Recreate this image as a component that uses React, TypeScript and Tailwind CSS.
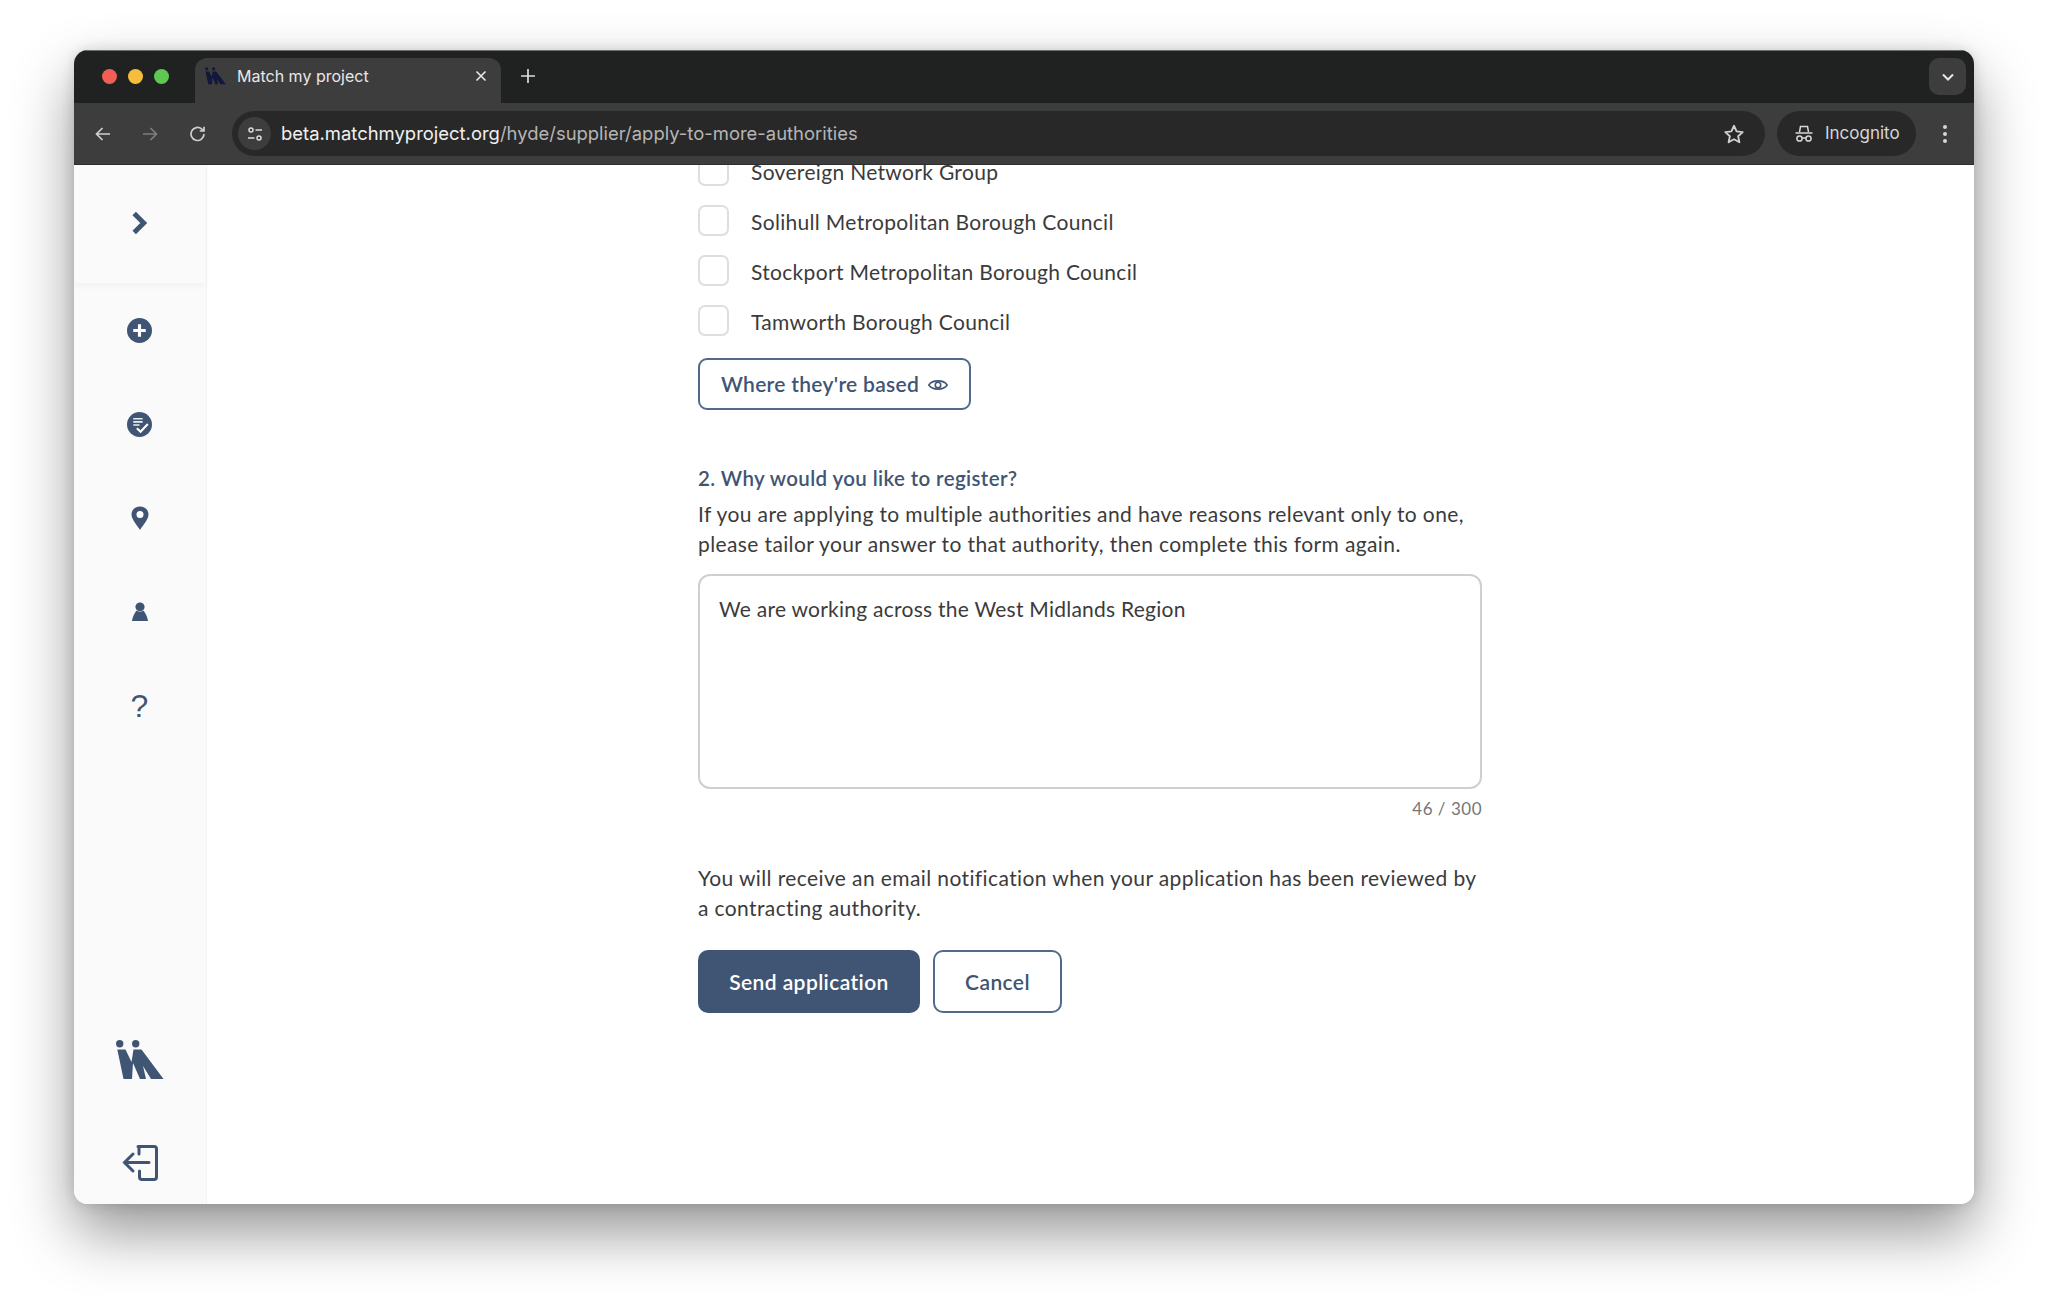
import React from "react";

const NAVY = "#405574";

function Logo({ className, fill }: { className: string; fill: string }) {
  return (
    <svg viewBox="11 11 48 40" className={className} fill={fill}>
      <circle cx="14.7" cy="14.7" r="3.7" />
      <circle cx="30.7" cy="14.7" r="3.7" />
      <path d="M12.3 20.5 L20.5 20.5 L26.5 33 L28.5 20.5 L36.5 20.5 L58.5 50 L46 50 L38 37 L41 50 L35 50 L28 34 L27 50 L18.5 50 Z" />
    </svg>
  );
}

function Row({ label }: { label: string }) {
  return (
    <div className="flex items-center h-[31px] mb-[19px]">
      <span className="w-[31px] h-[31px] rounded-[7px] border-2 border-[#dedede] bg-white shrink-0" />
      <span className="ml-[22px] pt-[2px] text-[21px] tracking-[0.32px] text-[#3b3b3b]">{label}</span>
    </div>
  );
}

function NavItem({ children }: { children: React.ReactNode }) {
  return <div className="h-[94px] flex items-center justify-center">{children}</div>;
}

export default function App() {
  return (
    <div
      className="w-[2048px] h-[1302px] bg-white overflow-hidden pt-[50px] pl-[74px]"
      style={{ fontFamily: "Lato, 'Liberation Sans', sans-serif" }}
    >
      <div className="w-[1900px] h-[1154px] rounded-[14px] overflow-hidden flex flex-col shadow-[0_28px_60px_rgba(0,0,0,0.42),0_0_14px_rgba(0,0,0,0.14)]">
        {/* tab strip */}
        <div className="h-[53px] bg-[#202221] flex items-end relative shrink-0 border-t border-[#6f6f6f]" style={{ fontFamily: "Inter, sans-serif" }}>
          <div className="flex items-center gap-[11px] pl-[28px] w-[121px] h-[52px] shrink-0 pb-[2px]">
            <span className="w-[15px] h-[15px] rounded-full bg-[#ef5f56] shrink-0" />
            <span className="w-[15px] h-[15px] rounded-full bg-[#f6bd3d] shrink-0" />
            <span className="w-[15px] h-[15px] rounded-full bg-[#5fc853] shrink-0" />
          </div>
          <div className="w-[306px] h-[45px] bg-[#3d3d3d] rounded-t-[12px] flex items-center pl-[10px] pr-[14px] shrink-0 pb-[9px]">
            <Logo className="w-[21px] h-[18px]" fill="#12173d" />
            <span className="ml-[11px] text-[16px] text-[#e8e8e8]">Match my project</span>
            <svg viewBox="0 0 12 12" className="w-[12px] h-[12px] ml-auto" stroke="#e8e8e8" strokeWidth="1.6" fill="none">
              <path d="M1.5 1.5 L10.5 10.5 M10.5 1.5 L1.5 10.5" />
            </svg>
          </div>
          <div className="h-[45px] pb-[9px] flex items-center ml-[19px]">
            <svg viewBox="0 0 16 16" className="w-[16px] h-[16px]" stroke="#dcdcdc" strokeWidth="1.7" fill="none">
              <path d="M8 1 V15 M1 8 H15" />
            </svg>
          </div>
          <div className="absolute right-[8px] top-[7px] w-[37px] h-[37px] bg-[#3d3d3d] rounded-[10px] flex items-center justify-center">
            <svg viewBox="0 0 14 14" className="w-[14px] h-[14px]" stroke="#e8e8e8" strokeWidth="2" fill="none">
              <path d="M2 4.5 L7 9.5 L12 4.5" />
            </svg>
          </div>
        </div>

        {/* toolbar */}
        <div className="h-[62px] bg-[#3d3d3d] flex items-center shrink-0 border-b border-[#2e2e2e]" style={{ fontFamily: "Inter, sans-serif" }}>
          <div className="w-[158px] flex items-center shrink-0">
            <svg viewBox="0 0 20 20" className="w-[20px] h-[20px] ml-[19px]" stroke="#cfcfcf" strokeWidth="1.7" fill="none">
              <path d="M17 10 H3.5 M9.5 4 L3.5 10 L9.5 16" />
            </svg>
            <svg viewBox="0 0 20 20" className="w-[20px] h-[20px] ml-[27px]" stroke="#7e7e7e" strokeWidth="1.7" fill="none">
              <path d="M3 10 H16.5 M10.5 4 L16.5 10 L10.5 16" />
            </svg>
            <svg viewBox="0 0 20 20" className="w-[20px] h-[20px] ml-[28px]" stroke="#cfcfcf" strokeWidth="1.7" fill="none">
              <path d="M16 10 A6.5 6.5 0 1 1 13.8 5.1 L16 7 M16 2.8 V7 H11.8" />
            </svg>
          </div>
          <div className="w-[1533px] h-[45px] rounded-full bg-[#282828] flex items-center shrink-0 pl-[6px] pr-[20px]">
            <span className="w-[33px] h-[33px] rounded-full bg-[#3d3d3d] flex items-center justify-center shrink-0">
              <svg viewBox="0 0 18 18" className="w-[18px] h-[18px]" stroke="#dcdcdc" strokeWidth="1.5" fill="none">
                <circle cx="5" cy="5" r="2" />
                <path d="M9.5 5 H16 M2 13 H8.5" />
                <circle cx="13" cy="13" r="2" />
              </svg>
            </span>
            <span className="ml-[10px] text-[18.45px] text-[#b5b5b5]">
              <span className="text-[#f0f0f0]">beta.matchmyproject.org</span>/hyde/supplier/apply-to-more-authorities
            </span>
            <svg viewBox="0 0 24 24" className="w-[22px] h-[22px] ml-auto" stroke="#d0d0d0" strokeWidth="2" fill="none">
              <path d="M12 3 L14.8 9.1 L21.5 9.9 L16.5 14.4 L17.9 21 L12 17.7 L6.1 21 L7.5 14.4 L2.5 9.9 L9.2 9.1 Z" strokeLinejoin="round" />
            </svg>
          </div>
          <div className="ml-[12px] w-[139px] h-[45px] rounded-full bg-[#282828] flex items-center pl-[17px] shrink-0">
            <svg viewBox="0 0 20 20" className="w-[20px] h-[20px]" stroke="#d6d6d6" strokeWidth="1.5" fill="none">
              <path d="M5.5 8 L6.5 2.5 H13.5 L14.5 8 M1.5 9 H18.5" />
              <circle cx="5.5" cy="14.5" r="2.6" />
              <circle cx="14.5" cy="14.5" r="2.6" />
              <path d="M8 14 H12" />
            </svg>
            <span className="ml-[11px] text-[17px] text-[#d6d6d6]">Incognito</span>
          </div>
          <div className="ml-[27px] flex flex-col gap-[3px]">
            <span className="w-[4px] h-[4px] rounded-full bg-[#d6d6d6]" />
            <span className="w-[4px] h-[4px] rounded-full bg-[#d6d6d6]" />
            <span className="w-[4px] h-[4px] rounded-full bg-[#d6d6d6]" />
          </div>
        </div>

        {/* page */}
        <div className="flex-1 flex min-h-0 bg-white">
          <aside className="w-[133px] shrink-0 bg-[#fafafa] border-r border-[#f3f3f3] flex flex-col pr-[1px]">
            <div className="h-[118px] flex items-center justify-center shadow-[0_3px_7px_rgba(0,0,0,0.04)]">
              <svg viewBox="0 0 16 22" className="w-[17px] h-[24px] -mt-[2px]" stroke={NAVY} strokeWidth="4.6" fill="none">
                <path d="M3 2 L12 11 L3 20" />
              </svg>
            </div>
            <NavItem>
              <svg viewBox="0 0 24 24" className="w-[25px] h-[25px]">
                <circle cx="12" cy="12" r="12" fill={NAVY} />
                <path d="M12 6 V18 M6 12 H18" stroke="#fff" strokeWidth="3" />
              </svg>
            </NavItem>
            <NavItem>
              <svg viewBox="0 0 24 24" className="w-[25px] h-[25px]">
                <circle cx="12" cy="12" r="12" fill={NAVY} />
                <path d="M6 6.5 H15 M6 9.5 H15 M6 12.5 H12" stroke="#e9edf2" strokeWidth="1.5" />
                <path d="M9.5 15.5 L13 19 L20 11.5" stroke="#fff" strokeWidth="2" fill="none" />
              </svg>
            </NavItem>
            <NavItem>
              <svg viewBox="0 0 18 24" className="w-[18px] h-[24px]">
                <path d="M9 0.5 C4 0.5 0.5 4 0.5 8.5 C0.5 13.5 6 19 9 24 C12 19 17.5 13.5 17.5 8.5 C17.5 4 14 0.5 9 0.5 Z" fill={NAVY} />
                <circle cx="9" cy="8.5" r="3.5" fill="#fff" />
              </svg>
            </NavItem>
            <NavItem>
              <svg viewBox="0 0 16 19" className="w-[16px] h-[19px] -mt-[2px]" fill={NAVY}>
                <ellipse cx="8" cy="4.8" rx="4.6" ry="4.4" />
                <path d="M4.5 8.5 C6 10 10 10 11.5 8.5 C13.5 11 15.5 15 16 19 H0 C0.5 15 2.5 11 4.5 8.5 Z" />
              </svg>
            </NavItem>
            <NavItem>
              <span className="text-[32px] leading-none text-[#405574]" style={{ fontFamily: "'Liberation Sans', sans-serif" }}>?</span>
            </NavItem>
            <div className="mt-auto flex flex-col items-center pb-[23px]">
              <Logo className="w-[48px] h-[40px]" fill={NAVY} />
              <svg viewBox="0 0 36 36" className="w-[36px] h-[36px] mt-[65px]" stroke={NAVY} strokeWidth="3" fill="none">
                <path d="M16 1.5 H32 A2.5 2.5 0 0 1 34.5 4 V32 A2.5 2.5 0 0 1 32 34.5 H20 A2.5 2.5 0 0 1 17.5 32 V26 M17 9 V1.5 M27 17.5 H3 M11 9 L2.5 17.5 L11 26" strokeLinecap="round" />
              </svg>
            </div>
          </aside>

          <main className="flex-1 overflow-hidden pl-[491px]">
            <div className="w-[784px] -mt-[10px]">
              <Row label="Sovereign Network Group" />
              <Row label="Solihull Metropolitan Borough Council" />
              <Row label="Stockport Metropolitan Borough Council" />
              <Row label="Tamworth Borough Council" />
              <button className="mt-[22px] w-[273px] h-[52px] rounded-[9px] border-2 border-[#53698a] bg-white flex items-center pl-[21px] text-[21px] font-semibold tracking-[0.3px] text-[#405574]">
                Where they're based
                <svg viewBox="0 0 24 24" className="w-[22px] h-[22px] ml-[8px] mt-[2px]" stroke="#405574" strokeWidth="1.7" fill="none">
                  <path d="M2 12 C6 6 18 6 22 12 C18 18 6 18 2 12 Z" />
                  <circle cx="12" cy="12" r="3" />
                </svg>
              </button>
              <h2 className="mt-[54px] text-[20.5px] leading-[28px] font-semibold tracking-[0.38px] text-[#405574]">2. Why would you like to register?</h2>
              <p className="mt-[7px] text-[21px] leading-[30px] tracking-[0.38px] text-[#3b3b3b]">
                If you are applying to multiple authorities and have reasons relevant only to one, please tailor your answer to that authority, then complete this form again.
              </p>
              <div className="mt-[15px] h-[215px] rounded-[12px] border-2 border-[#cfcfcf] px-[19px] py-[18px] text-[21px] leading-[30px] tracking-[0.25px] text-[#3b3b3b]">
                We are working across the West Midlands Region
              </div>
              <div className="mt-[8px] text-right text-[17px] leading-[24px] tracking-[0.5px] text-[#767676]">46 / 300</div>
              <p className="mt-[42px] text-[21px] leading-[30px] tracking-[0.39px] text-[#3b3b3b]">
                You will receive an email notification when your application has been reviewed by a contracting authority.
              </p>
              <div className="mt-[27px] flex gap-[13px]">
                <button className="w-[222px] h-[63px] rounded-[10px] bg-[#405574] text-white text-[21px] font-semibold tracking-[0.4px]">Send application</button>
                <button className="w-[129px] h-[63px] rounded-[10px] border-2 border-[#53698a] bg-white text-[#405574] text-[21px] font-semibold tracking-[0.4px]">Cancel</button>
              </div>
            </div>
          </main>
        </div>
      </div>
    </div>
  );
}
